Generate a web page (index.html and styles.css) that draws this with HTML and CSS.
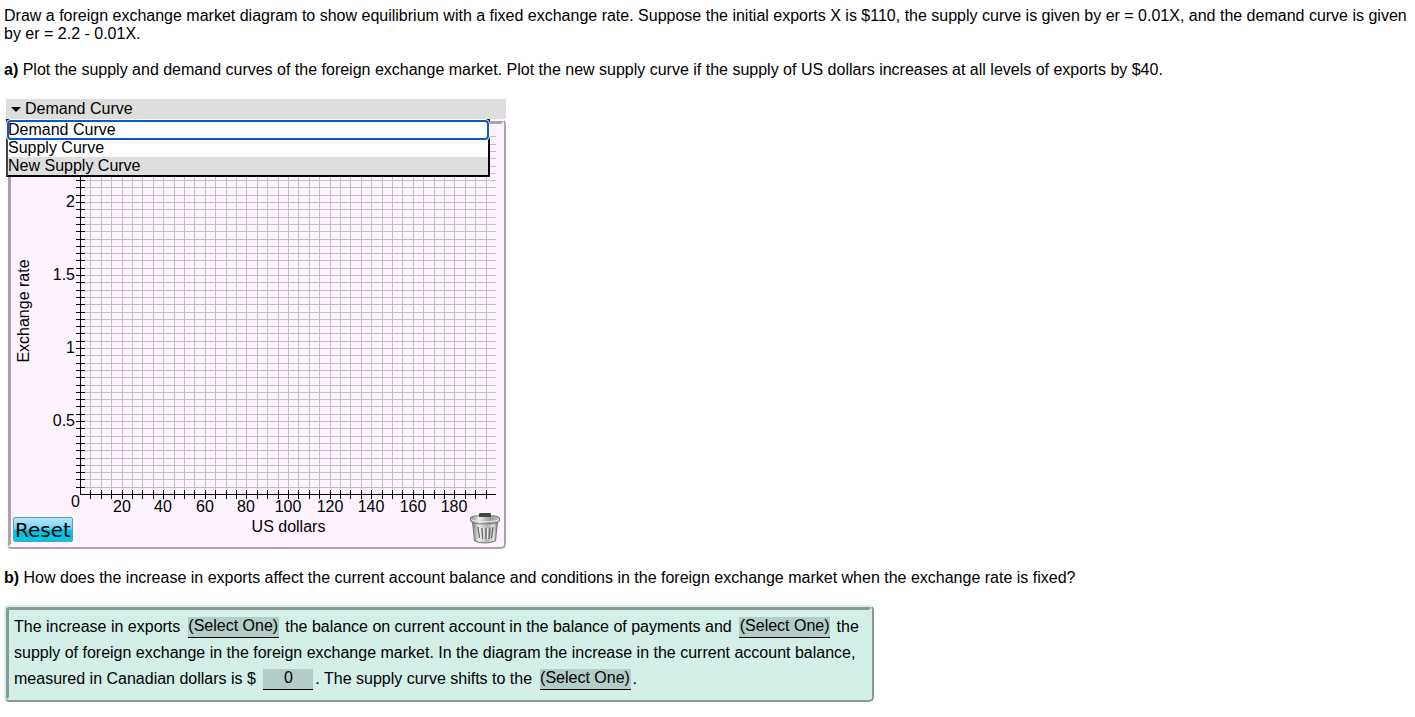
FILE: index.html
```html
<!DOCTYPE html>
<html lang="en">
<head>
  <meta charset="UTF-8">
  <meta name="viewport" content="width=device-width, initial-scale=1.0">
  <title>Foreign Exchange Market</title>
  <link rel="stylesheet" href="styles.css">
</head>
<body>
  <p>Draw a foreign exchange market diagram to show equilibrium with a fixed exchange rate. Suppose the initial exports X is $110, the supply curve is given by er = 0.01X, and the demand curve is given by er = 2.2 - 0.01X.</p>
  <p><b>a)</b> Plot the supply and demand curves of the foreign exchange market. Plot the new supply curve if the supply of US dollars increases at all levels of exports by $40.</p>

  <div class="graph">
    <!-- Curve picker -->
    <div class="picker">
      <button type="button" class="picker-button" id="pickerButton" aria-haspopup="true" aria-expanded="true">
        <svg class="arrow" width="10" height="6" viewBox="0 0 10 6" aria-hidden="true"><path d="M0 1H10L5 6Z"/></svg>
        <span id="curveName">Demand Curve</span>
      </button>
      <div class="menu" id="menu">
        <button type="button" class="option selected">Demand Curve</button>
        <button type="button" class="option">Supply Curve</button>
        <button type="button" class="option hover">New Supply Curve</button>
      </div>
    </div>

    <!-- Plot -->
    <div class="panel">
      <svg class="plot" id="plot" viewBox="0 0 490 389" role="img" aria-label="Exchange rate against US dollars">
        <path id="grid" class="grid"/>
        <path id="axes" class="axes"/>
        <g id="labels"></g>
        <text x="60" y="383">0</text>
        <text class="mid" transform="translate(18 187) rotate(-90)">Exchange rate</text>
      </svg>
      <div class="panel-footer">
        <button type="button" class="reset">Reset</button>
        <span class="x-title">US dollars</span>
        <button type="button" class="trash" aria-label="Delete curve">
          <svg width="30" height="32" viewBox="0 0 30 32" aria-hidden="true">
            <defs>
              <linearGradient id="can">
                <stop offset="0" stop-color="#777"/>
                <stop offset="0.25" stop-color="#eee"/>
                <stop offset="0.6" stop-color="#b4b4b4"/>
                <stop offset="0.85" stop-color="#e0e0e0"/>
                <stop offset="1" stop-color="#777"/>
              </linearGradient>
              <linearGradient id="lid">
                <stop offset="0" stop-color="#888"/>
                <stop offset="0.3" stop-color="#eee"/>
                <stop offset="0.65" stop-color="#999"/>
                <stop offset="1" stop-color="#bbb"/>
              </linearGradient>
            </defs>
            <path d="M2.500 9L4.500 28Q15 32 25.500 28L27.500 9Z" fill="url(#can)" stroke="#777"/>
            <path d="M0.5 5Q0.5 2.5 15 2.5T29.5 5V8Q28 11 15 11T0.5 8Z" fill="url(#lid)" stroke="#777"/>
            <path d="M1 6.500Q4 8.500 15 8.500T29 6.500" fill="none" stroke="#e8e8e8"/>
            <path d="M9 4V1Q9 0 10 0H20Q21 0 21 1V4Z" fill="#444"/>
            <path d="M8 14L9.500 25M12 15L12.700 26M16 15V26M20 14.500L19 26M23 14L21.500 25" fill="none" stroke="#666" stroke-width="1.300"/>
            <path d="M9.500 14L11 25M13.500 15L14 26M17.500 15V26" fill="none" stroke="#eee"/>
          </svg>
        </button>
      </div>
    </div>
  </div>

  <p><b>b)</b> How does the increase in exports affect the current account balance and conditions in the foreign exchange market when the exchange rate is fixed?</p>

  <form class="answer">
    The increase in exports
    <select class="blank" aria-label="Effect on the balance"><option>(Select One)</option><option>increases</option><option>decreases</option></select>
    the balance on current account in the balance of payments and
    <select class="blank" aria-label="Effect on the supply"><option>(Select One)</option><option>increases</option><option>decreases</option></select>
    the supply of foreign exchange in the foreign exchange market. In the diagram the increase in the current account balance, measured in Canadian dollars is $
    <input type="text" class="blank number" value="0" aria-label="Increase in Canadian dollars">. The supply curve shifts to the
    <select class="blank" aria-label="Direction of the shift"><option>(Select One)</option><option>right</option><option>left</option></select>.
  </form>

  <script>
    // Origin and step sizes of the plot
    const originX = 69;
    const originY = 370;
    const stepX = 10.4; // 5 US dollars
    const stepY = 7.3;  // 0.05 of the exchange rate
    const plotRight = 485;
    const plotTop = 5;

    let grid = '';
    let axes = `M${originX + 0.5} ${plotTop}V${originY + 1}M${originX} ${originY + 0.5}H${plotRight}`;
    let labels = '';

    // Vertical grid lines, ticks and labels along the x axis
    for (let i = 1; i < 40; i++) {
      const x = Math.round(originX + i * stepX) + 0.5;
      grid += `M${x} ${plotTop}V${originY}`;
      axes += `M${x} ${originY - 4}v9`;
      if (i % 4 === 0) {
        labels += `<text class="mid" x="${Math.floor(x)}" y="388">${i * 5}</text>`;
      }
    }

    // Horizontal grid lines, ticks and labels along the y axis
    for (let i = 1; i < 50; i++) {
      const y = Math.round(originY - i * stepY) + 0.5;
      grid += `M${originX} ${y}H${plotRight}`;
      axes += `M${originX - 4} ${y}h9`;
      if (i % 10 === 0) {
        labels += `<text class="end" x="64" y="${Math.floor(y) + 5}">${i / 20}</text>`;
      }
    }

    document.getElementById('grid').setAttribute('d', grid);
    document.getElementById('axes').setAttribute('d', axes);
    document.getElementById('labels').innerHTML = labels;

    // Curve picker
    const pickerButton = document.getElementById('pickerButton');
    const menu = document.getElementById('menu');

    pickerButton.addEventListener('click', () => {
      menu.hidden = !menu.hidden;
      pickerButton.setAttribute('aria-expanded', String(!menu.hidden));
    });

    menu.addEventListener('click', (e) => {
      if (e.target.classList.contains('option')) {
        menu.querySelector('.selected').classList.remove('selected');
        e.target.classList.add('selected');
        document.getElementById('curveName').textContent = e.target.textContent;
        menu.hidden = true;
        pickerButton.setAttribute('aria-expanded', 'false');
      }
    });
  </script>
</body>
</html>
```

FILE: styles.css
```css
/* General Styles */
body {
  font-family: Arial, "Liberation Sans", sans-serif;
  font-size: 16px;
  line-height: 18px;
  color: #000;
  background: #fff;
  margin: 0;
  padding: 7px 4px;
}

p {
  margin: 0 0 18px;
}

button,
input,
select {
  font: inherit;
  color: inherit;
  border: 0;
  border-radius: 0;
  margin: 0;
  padding: 0;
  box-sizing: border-box;
}

/* Graph */
.graph {
  max-width: 500px;
  margin: 20px 2px;
}

.picker {
  position: relative;
  z-index: 1;
}

.picker-button {
  display: flex;
  align-items: center;
  gap: 4px;
  width: 100%;
  height: 20px;
  padding: 0 5px;
  background: #dedede;
}

.menu {
  position: absolute;
  top: 100%;
  left: 0;
  right: 16px;
  border: 2px solid #000;
  border-left-color: #444;
  background: #fff;
}

.menu[hidden] {
  display: none;
}

.option {
  display: block;
  width: 100%;
  height: 18px;
  text-align: left;
  background: #fff;
}

.option.hover,
.option:hover {
  background: #dedede;
}

.option.selected {
  position: relative;
  outline: 2px solid #0b57d0;
  outline-offset: -1px;
  border-radius: 3px;
  box-shadow: 0 0 0 2px #fff;
}

.panel {
  border: 5px ridge #fdf3ff;
  border-radius: 5px;
  background: #fdf3ff;
}

.plot {
  display: block;
  width: 100%;
  overflow: visible;
}

.plot text {
  font-size: 16px;
}

.plot .mid {
  text-anchor: middle;
}

.plot .end {
  text-anchor: end;
}

.grid,
.axes {
  fill: none;
  stroke: #c0c0c0;
  shape-rendering: crispEdges;
}

.axes {
  stroke: #000;
}

.panel-footer {
  display: flex;
  justify-content: space-between;
  height: 31px;
  padding: 0 1px 0 2px;
}

.reset {
  width: 60px;
  height: 25px;
  margin-top: 4px;
  border: 1px solid #5c9fb5;
  border-radius: 2px;
  background: linear-gradient(#b5e8ff, #6fd3f2 48%, #00c4e6 52%, #00c8e4);
  font: 20px/22px "DejaVu Sans", sans-serif;
}

.x-title {
  padding: 5px 0 0 34px;
}

.trash {
  width: 30px;
  height: 31px;
  background: none;
}

.trash svg {
  display: block;
}

/* Answer */
.answer {
  max-width: 850px;
  padding: 4px 5px 5px;
  border: 5px ridge #d4eee8;
  border-radius: 5px;
  background: #d4eee8;
  line-height: 26px;
}

.blank {
  appearance: none;
  width: 91px;
  height: 21px;
  margin: 0 2px 0 3px;
  padding-bottom: 2px;
  border-bottom: 1px solid #000;
  background: #b3ccc7;
  line-height: 18px;
  text-align: center;
  vertical-align: 1px;
}

.number {
  width: 50px;
}
```
